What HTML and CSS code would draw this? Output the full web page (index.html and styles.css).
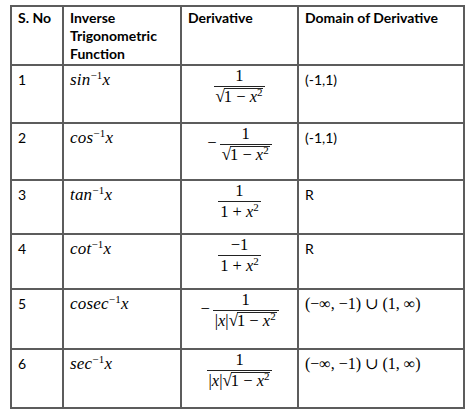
FILE: index.html
```html
<!DOCTYPE html>
<html>
<head>
<meta charset="utf-8">
<link rel="stylesheet" href="styles.css">
</head>
<body>
<table class="tbl">
  <colgroup>
    <col class="c1"><col class="c2"><col class="c3"><col class="c4">
  </colgroup>
  <tr class="head">
    <th>S. No</th>
    <th>Inverse Trigonometric Function</th>
    <th>Derivative</th>
    <th>Domain of Derivative</th>
  </tr>
  <tr class="r1">
    <td>1</td>
    <td><span class="fn">sin<sup>−1</sup>x</span></td>
    <td class="der"><span class="frac"><span class="num">1</span><span class="den"><span class="sq">√</span><span class="rad">1 − <i>x</i><sup>2</sup></span></span></span></td>
    <td>(-1,1)</td>
  </tr>
  <tr class="r2">
    <td>2</td>
    <td><span class="fn">cos<sup>−1</sup>x</span></td>
    <td class="der"><span class="neg">−</span><span class="frac"><span class="num">1</span><span class="den"><span class="sq">√</span><span class="rad">1 − <i>x</i><sup>2</sup></span></span></span></td>
    <td>(-1,1)</td>
  </tr>
  <tr class="r3">
    <td>3</td>
    <td><span class="fn">tan<sup>−1</sup>x</span></td>
    <td class="der"><span class="frac"><span class="num">1</span><span class="den">1 + <i>x</i><sup>2</sup></span></span></td>
    <td>R</td>
  </tr>
  <tr class="r4">
    <td>4</td>
    <td><span class="fn">cot<sup>−1</sup>x</span></td>
    <td class="der"><span class="frac"><span class="num">−1</span><span class="den">1 + <i>x</i><sup>2</sup></span></span></td>
    <td>R</td>
  </tr>
  <tr class="r5">
    <td>5</td>
    <td><span class="fn">cosec<sup>−1</sup>x</span></td>
    <td class="der"><span class="neg">−</span><span class="frac"><span class="num">1</span><span class="den">|<i>x</i>|<span class="sq">√</span><span class="rad">1 − <i>x</i><sup>2</sup></span></span></span></td>
    <td><span class="mth">(−∞, −1) ∪ (1, ∞)</span></td>
  </tr>
  <tr class="r6">
    <td>6</td>
    <td><span class="fn">sec<sup>−1</sup>x</span></td>
    <td class="der"><span class="frac"><span class="num">1</span><span class="den">|<i>x</i>|<span class="sq">√</span><span class="rad">1 − <i>x</i><sup>2</sup></span></span></span></td>
    <td><span class="mth">(−∞, −1) ∪ (1, ∞)</span></td>
  </tr>
</table>
</body>
</html>
```
FILE: styles.css
```css
html, body {
  margin: 0;
  padding: 0;
  background: #ffffff;
}
body {
  font-family: "Lato", "Open Sans", sans-serif;
  color: #000;
  font-size: 14px;
}
.tbl {
  margin: 5px 0 0 10px;
  border-collapse: collapse;
  table-layout: fixed;
  width: 453px;
}
.c1 { width: 52px; }
.c2 { width: 118px; }
.c3 { width: 117px; }
.c4 { width: 166px; }
.tbl th, .tbl td {
  border: 2px solid #5c5c5c;
  vertical-align: top;
  text-align: left;
  padding: 4px 6px 0 6px;
  line-height: 19px;
  box-sizing: border-box;
}
.tbl th {
  font-weight: bold;
  padding-top: 2px;
  line-height: 18px;
}
.head { height: 59px; }
.r1 { height: 58px; }
.r2 { height: 57px; }
.r3 { height: 54px; }
.r4 { height: 55px; }
.r5 { height: 60px; }
.r6 { height: 59px; }
.fn {
  font-family: "Liberation Serif", "DejaVu Serif", serif;
  font-style: italic;
  font-size: 17px;
  letter-spacing: 0.2px;
}
.fn sup {
  font-style: normal;
  font-size: 11px;
  vertical-align: 6px;
  line-height: 0;
}
.der {
  text-align: center !important;
  padding-top: 1px !important;
  font-family: "Liberation Serif", "DejaVu Serif", serif;
  font-size: 16.5px;
}
.der i { font-style: italic; }
.der sup {
  font-size: 11px;
  vertical-align: 6px;
  line-height: 0;
}
.neg {
  display: inline-block;
  vertical-align: top;
  margin-top: 8px;
  margin-right: 3px;
}
.frac {
  display: inline-flex;
  flex-direction: column;
  align-items: center;
  vertical-align: top;
}
.num {
  line-height: 18px;
  padding-bottom: 1px;
}
.den {
  border-top: 1.5px solid #222;
  line-height: 18px;
  padding: 1px 2px 0 2px;
  white-space: nowrap;
}
.sq {
  font-size: 17px;
  margin-right: -1px;
}
.rad {
  border-top: 1px solid #222;
  display: inline-block;
  line-height: 16px;
  padding-right: 1px;
}
.mth {
  font-family: "Liberation Serif", "DejaVu Serif", serif;
  font-size: 16px;
}
```
